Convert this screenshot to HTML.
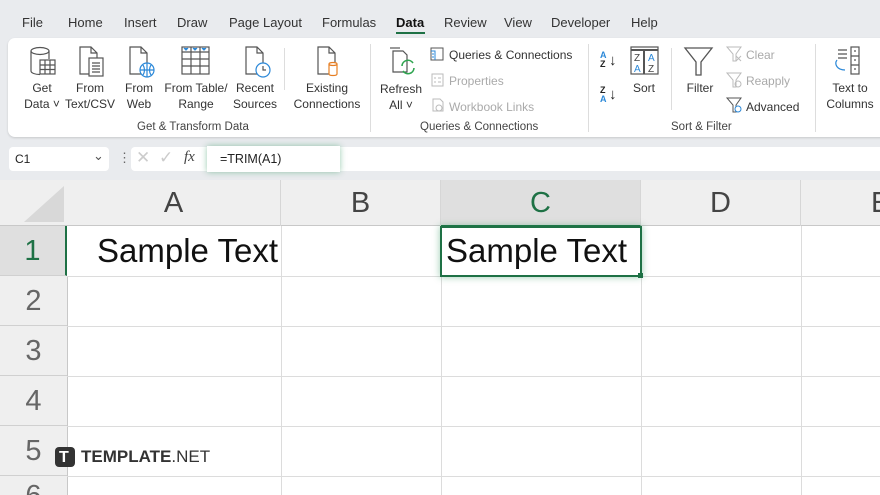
<!DOCTYPE html>
<html style="width:880px;height:495px;overflow:hidden"><head><meta charset="utf-8"><style>
*{margin:0;padding:0;box-sizing:border-box}
body{width:880px;height:495px;overflow:hidden;background:#e9ebee;font-family:"Liberation Sans",sans-serif;position:relative;color:#222}
.a{position:absolute}
.tab{position:absolute;top:15px;font-size:13px;color:#333}
.lbl{position:absolute;font-size:12px;color:#333;text-align:center;line-height:16px;white-space:nowrap}
.grp{position:absolute;top:121px;font-size:11.5px;color:#444}
.sm{position:absolute;font-size:12px;color:#333;white-space:nowrap}
.dim{color:#aaa}
.vs{position:absolute;width:1px;background:#ddd}
svg{position:absolute;overflow:visible}
.ch{position:absolute;top:180px;height:46px;font-size:29px;color:#444;text-align:center;line-height:46px;border-right:1px solid #d6d6d6}
.rh{position:absolute;left:0;width:67px;height:50px;font-size:29px;color:#666;text-align:center;line-height:50px;border-bottom:1px solid #d0d0d0;background:#efefef}
.hl{position:absolute;left:67px;right:0;height:1px;background:#dcdcdc}
.vl{position:absolute;top:226px;height:269px;width:1px;background:#dcdcdc}
.cell{position:absolute;font-size:33px;color:#111}
</style></head><body>
<div class="tab" style="left:22px">File</div>
<div class="tab" style="left:68px">Home</div>
<div class="tab" style="left:124px">Insert</div>
<div class="tab" style="left:177px">Draw</div>
<div class="tab" style="left:229px">Page Layout</div>
<div class="tab" style="left:322px">Formulas</div>
<div class="tab" style="left:396px;color:#111;font-weight:bold">Data</div>
<div class="a" style="left:396px;top:32px;width:29px;height:2px;background:#1e7145"></div>
<div class="tab" style="left:444px">Review</div>
<div class="tab" style="left:504px">View</div>
<div class="tab" style="left:551px">Developer</div>
<div class="tab" style="left:631px">Help</div>
<div class="a" style="left:8px;top:38px;width:880px;height:99px;background:#fff;border-radius:7px;box-shadow:0 1px 2px rgba(0,0,0,.15)"></div>
<svg style="left:29px;top:46px" width="30" height="32" fill="none" stroke="#555" stroke-width="1.2"><ellipse cx="11" cy="5" rx="9" ry="3.5"/><path d="M2 5v20c0 2 4 3.5 9 3.5M20 5v8"/><rect x="11" y="14" width="15" height="14" fill="#fff"/><path d="M11 19h15M11 23.5h15M16 14v14M21 14v14"/></svg>
<svg style="left:78px;top:46px" width="28" height="32" fill="none" stroke="#555" stroke-width="1.2"><path d="M2 1h11l6 6v21H2z M13 1v6h6"/><rect x="11" y="12" width="14" height="18" fill="#fff"/><path d="M14 17h8M14 20h8M14 23h8M14 26h8"/></svg>
<svg style="left:128px;top:46px" width="30" height="32" fill="none" stroke="#555" stroke-width="1.2"><path d="M2 1h11l6 6v21H2z M13 1v6h6"/><circle cx="19" cy="24" r="7" fill="#fff" stroke="#2b88d8"/><path d="M12 24h14M19 17v14M15 19c2 3 2 7 0 10M23 19c-2 3-2 7 0 10" stroke="#2b88d8"/></svg>
<svg style="left:181px;top:46px" width="30" height="30" fill="none" stroke="#555" stroke-width="1.2"><rect x="1" y="1" width="27" height="27"/><path d="M1 6h27M1 13h27M1 20h27M10 1v27M19 1v27"/><path d="M3 2l2 2 2-2M12 2l2 2 2-2M21 2l2 2 2-2" stroke="#2b88d8" fill="#2b88d8"/></svg>
<svg style="left:244px;top:46px" width="30" height="32" fill="none" stroke="#555" stroke-width="1.2"><path d="M2 1h11l6 6v21H2z M13 1v6h6"/><circle cx="19" cy="24" r="7" fill="#fff" stroke="#2b88d8"/><path d="M19 20v4h3" stroke="#555"/></svg>
<div class="vs" style="left:284px;top:48px;height:42px"></div>
<svg style="left:316px;top:46px" width="30" height="32" fill="none" stroke="#555" stroke-width="1.2"><path d="M2 1h11l6 6v21H2z M13 1v6h6"/><path d="M13 18v10c0 2 8 2 8 0V18" fill="#fff" stroke="#e67e22"/><ellipse cx="17" cy="18" rx="4" ry="1.5" fill="#fff" stroke="#e67e22"/></svg>
<div class="lbl" style="left:22px;top:80px;width:40px">Get<br>Data ˅</div>
<div class="lbl" style="left:64px;top:80px;width:52px">From<br>Text/CSV</div>
<div class="lbl" style="left:120px;top:80px;width:38px">From<br>Web</div>
<div class="lbl" style="left:162px;top:80px;width:68px">From Table/<br>Range</div>
<div class="lbl" style="left:230px;top:80px;width:50px">Recent<br>Sources</div>
<div class="lbl" style="left:290px;top:80px;width:74px">Existing<br>Connections</div>
<div class="grp" style="left:137px">Get &amp; Transform Data</div>
<div class="vs" style="left:370px;top:44px;height:88px"></div>
<svg style="left:390px;top:48px" width="30" height="30" fill="none" stroke="#555" stroke-width="1.2"><path d="M3 3h10l4 4v17H3z"/><path d="M0 0h10"/><path d="M12 18a6 6 0 0 1 11-3M24 20a6 6 0 0 1-11 3" stroke="#2ea44f" stroke-width="1.6"/></svg>
<div class="lbl" style="left:378px;top:81px;width:46px">Refresh<br>All ˅</div>
<svg style="left:430px;top:47px" width="14" height="14" fill="none" stroke="#2b88d8"><rect x="1" y="1" width="12" height="12" stroke="#555"/><path d="M1 4h4v9M2 7h2M2 10h2"/></svg>
<div class="sm" style="left:449px;top:48px">Queries &amp; Connections</div>
<svg style="left:431px;top:73px" width="14" height="14" fill="none" stroke="#bbb"><rect x="1" y="1" width="11" height="12"/><path d="M3 5h2M3 9h2M7 5h3M7 9h3"/></svg>
<div class="sm dim" style="left:449px;top:74px">Properties</div>
<svg style="left:431px;top:98px" width="14" height="14" fill="none" stroke="#bbb"><path d="M2 1h7l3 3v9H2z"/><circle cx="8" cy="10" r="3"/></svg>
<div class="sm dim" style="left:449px;top:100px">Workbook Links</div>
<div class="grp" style="left:420px">Queries &amp; Connections</div>
<div class="vs" style="left:588px;top:44px;height:88px"></div>
<div class="a" style="left:600px;top:51px;font-size:9px;line-height:9px;font-weight:bold"><span style="color:#2b88d8">A</span><br>Z</div>
<div class="a" style="left:609px;top:52px;font-size:15px">↓</div>
<div class="a" style="left:600px;top:86px;font-size:9px;line-height:9px;font-weight:bold">Z<br><span style="color:#2b88d8">A</span></div>
<div class="a" style="left:609px;top:86px;font-size:15px">↓</div>
<svg style="left:630px;top:46px" width="30" height="30" fill="none" stroke="#555" stroke-width="1.2"><rect x="1" y="1" width="27" height="27"/><path d="M1 4h27M14 4v24" stroke-width="2"/></svg>
<div class="a" style="left:634px;top:53px;font-size:10px;line-height:11px;color:#444">Z<br><span style="color:#2b88d8">A</span></div>
<div class="a" style="left:648px;top:53px;font-size:10px;line-height:11px;color:#444"><span style="color:#2b88d8">A</span><br>Z</div>
<div class="lbl" style="left:630px;top:80px;width:28px">Sort</div>
<div class="vs" style="left:671px;top:48px;height:62px"></div>
<svg style="left:684px;top:47px" width="30" height="30" fill="none" stroke="#555" stroke-width="1.3"><path d="M1 1h27L17 15v13h-5V15z"/></svg>
<div class="lbl" style="left:684px;top:80px;width:32px">Filter</div>
<svg style="left:726px;top:46px" width="16" height="16" fill="none" stroke="#bbb"><path d="M1 1h14L10 8v7H7V8z"/><path d="M10 10l5 5M15 10l-5 5"/></svg>
<div class="sm dim" style="left:746px;top:48px">Clear</div>
<svg style="left:726px;top:72px" width="16" height="16" fill="none" stroke="#bbb"><path d="M1 1h14L10 8v7H7V8z"/><circle cx="12" cy="12" r="3"/></svg>
<div class="sm dim" style="left:746px;top:74px">Reapply</div>
<svg style="left:726px;top:97px" width="16" height="16" fill="none" stroke="#555"><path d="M1 1h14L10 8v7H7V8z"/><circle cx="12" cy="12" r="3" stroke="#2b88d8" fill="#fff"/></svg>
<div class="sm" style="left:746px;top:100px">Advanced</div>
<div class="grp" style="left:671px">Sort &amp; Filter</div>
<div class="vs" style="left:815px;top:44px;height:88px"></div>
<svg style="left:832px;top:46px" width="32" height="30" fill="none" stroke="#555" stroke-width="1.2"><path d="M6 4h9M6 8h9M6 12h9"/><rect x="19" y="1" width="8" height="27"/><path d="M19 10h8M19 19h8M22 5h2M22 14h2M22 23h2"/><path d="M5 14c-3 4 0 10 8 10" stroke="#2b88d8"/></svg>
<div class="lbl" style="left:824px;top:80px;width:52px">Text to<br>Columns</div>
<div class="a" style="left:9px;top:147px;width:100px;height:24px;background:#fff;border-radius:4px"></div>
<div class="a" style="left:15px;top:152px;font-size:12px">C1</div>
<div class="a" style="left:93px;top:148px;font-size:13px;color:#555">⌄</div>
<div class="a" style="left:118px;top:150px;font-size:13px;color:#666">⋮</div>
<div class="a" style="left:131px;top:147px;width:76px;height:24px;background:#fff;border-radius:4px 0 0 4px"></div>
<div class="a" style="left:136px;top:148px;font-size:17px;color:#ccc">✕</div>
<div class="a" style="left:159px;top:148px;font-size:17px;color:#ccc">✓</div>
<div class="a" style="left:184px;top:149px;font-size:15px;font-style:italic;font-family:'Liberation Serif',serif;color:#444">fx</div>
<div class="a" style="left:209px;top:147px;width:671px;height:24px;background:#fff"></div>
<div class="a" style="left:207px;top:146px;width:133px;height:26px;background:#fff;box-shadow:0 0 6px rgba(30,140,80,.45)"></div>
<div class="a" style="left:220px;top:152px;font-size:12.5px">=TRIM(A1)</div>
<div class="a" style="left:0;top:180px;width:880px;height:315px;background:#fff"></div>
<div class="a" style="left:0;top:180px;width:880px;height:46px;background:#efefef;border-bottom:1px solid #c8c8c8"></div>
<svg style="left:22px;top:186px" width="44" height="38"><path d="M42 0v36H2z" fill="#d8d8d8"/></svg>
<div class="ch" style="left:67px;width:214px">A</div>
<div class="ch" style="left:281px;width:160px">B</div>
<div class="ch" style="left:441px;width:200px;background:#dfdfdf;color:#1e7145;border-bottom:1px solid #1e7145">C</div>
<div class="ch" style="left:641px;width:160px">D</div>
<div class="ch" style="left:801px;width:120px;text-align:left;padding-left:70px">E</div>
<div class="rh" style="top:226px;background:#dfdfdf;color:#1e7145;border-right:2px solid #1e7145">1</div>
<div class="rh" style="top:276px">2</div>
<div class="rh" style="top:326px">3</div>
<div class="rh" style="top:376px">4</div>
<div class="rh" style="top:426px">5</div>
<div class="rh" style="top:476px;height:19px;line-height:40px;overflow:hidden;border-bottom:none">6</div>
<div class="a" style="left:67px;top:276px;width:1px;height:219px;background:#c8c8c8"></div>
<div class="hl" style="top:276px"></div><div class="hl" style="top:326px"></div><div class="hl" style="top:376px"></div><div class="hl" style="top:426px"></div><div class="hl" style="top:476px"></div>
<div class="vl" style="left:281px"></div><div class="vl" style="left:441px"></div><div class="vl" style="left:641px"></div><div class="vl" style="left:801px"></div>
<div class="cell" style="left:97px;top:232px">Sample Text</div>
<div class="a" style="left:440px;top:226px;width:202px;height:51px;border:2px solid #1e7145;box-shadow:0 0 7px rgba(30,140,80,.45);background:#fff"></div>
<div class="a" style="left:638px;top:273px;width:5px;height:5px;background:#1e7145"></div>
<div class="cell" style="left:446px;top:232px">Sample Text</div>
<div class="a" style="left:55px;top:447px;width:20px;height:20px;background:#333;border-radius:4px"></div>
<div class="a" style="left:59px;top:449px;font-size:16px;font-weight:bold;color:#fff">T</div>
<div class="a" style="left:81px;top:447px;font-size:17px;color:#333"><b>TEMPLATE</b>.NET</div>
</body></html>
